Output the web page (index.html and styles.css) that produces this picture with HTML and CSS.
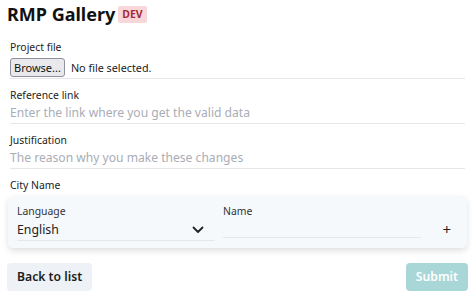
FILE: index.html
```html
<!DOCTYPE html>
<html>
<head>
<meta charset="utf-8">
<link rel="stylesheet" href="styles.css">
</head>
<body>
<div class="page">
  <header class="title-row">
    <h1 class="title">RMP Gallery</h1>
    <span class="badge">DEV</span>
  </header>
  <form class="form">
    <div class="field">
      <label class="label">Project file</label>
      <div class="file-row">
        <span class="browse">Browse...</span>
        <span class="file-text">No file selected.</span>
      </div>
    </div>
    <div class="field">
      <label class="label">Reference link</label>
      <div class="input placeholder">Enter the link where you get the valid data</div>
    </div>
    <div class="field">
      <label class="label">Justification</label>
      <div class="input placeholder">The reason why you make these changes</div>
    </div>
    <div class="field-city">
      <label class="label">City Name</label>
      <div class="card">
        <div class="col">
          <span class="sublabel">Language</span>
          <div class="select">
            <span>English</span>
            <svg class="chev" width="12" height="8" viewBox="0 0 12 8"><path d="M1.5 1.5 L6 6 L10.5 1.5" fill="none" stroke="#222" stroke-width="1.8" stroke-linecap="round" stroke-linejoin="round"/></svg>
          </div>
        </div>
        <div class="col">
          <span class="sublabel">Name</span>
          <div class="name-input"></div>
        </div>
        <span class="plus">+</span>
      </div>
    </div>
    <div class="actions">
      <span class="btn back">Back to list</span>
      <span class="btn submit">Submit</span>
    </div>
  </form>
</div>
</body>
</html>
```

FILE: styles.css
```css
* { box-sizing: border-box; }
html, body { margin: 0; padding: 0; background: #fff; }
body { font-family: "Noto Sans", "Open Sans", sans-serif; color: #222; }
.page { padding: 0 6px 0 7px; }
.title-row { display: flex; align-items: center; gap: 3px; height: 28px; }
.title { margin: 0; font-size: 18px; font-weight: 700; color: #111; }
.badge { background: #f8d7da; color: #a52a3a; font-size: 10.5px; font-weight: 700; padding: 1px 4px; border-radius: 2px; line-height: 15px; }
.form { display: flex; flex-direction: column; padding: 11px 3px 0 3px; }
.label { display: block; font-size: 10.4px; line-height: 16px; color: #222; }
.field { border-bottom: 1px solid #e4e6ea; margin-bottom: 8px; }
.file-row { display: flex; align-items: center; gap: 6px; height: 22px; margin-top: 1px; }
.browse { display: inline-block; font-size: 11px; line-height: 17px; padding: 0 3px; background: #e9e9ed; border: 1px solid #8f8f9d; border-radius: 3px; color: #111; }
.file-text { font-size: 10.8px; color: #222; }
.input { font-size: 12.1px; line-height: 20px; padding-bottom: 0; }
.placeholder { color: #a9adb5; }
.field-city { margin-top: 0; }
.card { margin: 3px -2px 0 -2px; background: #f6f9fc; border-radius: 5px; box-shadow: 0 3px 6px rgba(0,0,0,0.12); display: flex; align-items: flex-start; padding: 8px 10px 7px 9px; gap: 8px; height: 52px; }
.col { flex: 0 0 198px; display: flex; flex-direction: column; }
.sublabel { font-size: 10.4px; line-height: 15px; color: #333; }
.select { display: flex; align-items: center; justify-content: space-between; font-size: 12.3px; line-height: 20px; border-bottom: 1px solid #e4e7eb; padding-right: 11px; margin-top: 1px; }
.chev { display: block; }
.name-input { height: 19px; border-bottom: 1px solid #e4e7eb; margin-top: 0; }
.plus { margin-left: auto; font-size: 15px; line-height: 16px; margin-top: 17px; margin-right: 6px; color: #222; }
.actions { display: flex; justify-content: space-between; margin: 15px -3px 0 -3px; }
.btn { display: inline-block; font-size: 12.2px; font-weight: 600; line-height: 28px; padding: 0 10px; border-radius: 4px; }
.back { background: #eef1f5; color: #1a1d22; }
.submit { background: #a9d6d7; color: #fff; padding: 0 10px; margin-right: 0; }
```
